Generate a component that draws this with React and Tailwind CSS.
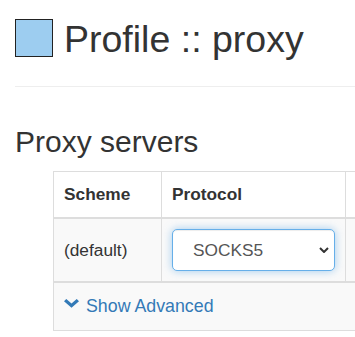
import React from 'react';

const ChevronDown = ({ className }) => (
  <svg className={className} viewBox="0 0 15 9" width="15" height="9" aria-hidden="true">
    <polygon points="0,2.3 2.3,0 7.5,4.5 12.7,0 15,2.3 7.5,8.8" fill="currentColor" />
  </svg>
);

const App = () => {
  const [protocol, setProtocol] = React.useState('SOCKS5');

  return (
    <div
      className="w-[355px] h-[337px] overflow-hidden bg-white text-[#333] px-[15px]"
      style={{ fontFamily: '"Liberation Sans", Arial, sans-serif' }}
    >
      {/* Page header */}
      <div className="flex items-start gap-[11px] pt-[19px] pb-[27px] border-b border-[#eee] w-[400px]">
        <span className="block w-[38px] h-[38px] bg-[#9dcdf0] border-[1.5px] border-[#222]" />
        <h1 className="text-[37.5px] leading-[40px] font-normal">Profile :: proxy</h1>
      </div>

      <h2 className="mt-[38px] text-[30px] leading-[33px] font-normal">Proxy servers</h2>

      {/* Proxy table */}
      <div className="ml-[38px] mt-[13px] w-[420px] border border-[#ddd] text-[17.3px] leading-[25px]">
        <div className="flex bg-white border-b-2 border-[#ddd] font-bold">
          <div className="w-[108px] px-[10px] py-[10px] border-r border-[#ddd]">Scheme</div>
          <div className="w-[184px] px-[10px] py-[10px] border-r border-[#ddd]">Protocol</div>
          <div className="flex-1 px-[10px] py-[10px] h-[45px]" />
        </div>

        <div className="flex bg-[#f9f9f9] border-b-2 border-[#ddd]">
          <div className="w-[108px] px-[10px] py-[10px] border-r border-[#ddd] flex items-center">(default)</div>
          <div className="w-[184px] px-[10px] py-[10px] border-r border-[#ddd]">
            <div className="relative">
              <select
                value={protocol}
                onChange={(e) => setProtocol(e.target.value)}
                className="block w-full h-[42px] appearance-none bg-white pl-[20px] pr-8 text-[17.3px] text-[#555] rounded-[5px] border border-[#66afe9] shadow-[inset_0_1px_1px_rgba(0,0,0,0.075),0_0_8px_rgba(102,175,233,0.6)] outline-none"
              >
                <option>HTTP</option>
                <option>HTTPS</option>
                <option>SOCKS4</option>
                <option>SOCKS5</option>
              </select>
              <svg className="absolute right-[6px] top-1/2 -translate-y-1/2 pointer-events-none" viewBox="0 0 10 6" width="10" height="6" aria-hidden="true">
                <polyline points="1,1 5,5 9,1" fill="none" stroke="#333" strokeWidth="2" />
              </svg>
            </div>
          </div>
          <div className="flex-1 px-[10px] py-[10px]" />
        </div>

        <div className="flex bg-[#f9f9f9] px-[10px] py-[11px]">
          <a href="#" className="flex items-start gap-[7px] text-[#337ab7] text-[17.8px]">
            <ChevronDown className="mt-[5px] shrink-0" />
            <span>Show Advanced</span>
          </a>
        </div>
      </div>
    </div>
  );
};

export default App;
